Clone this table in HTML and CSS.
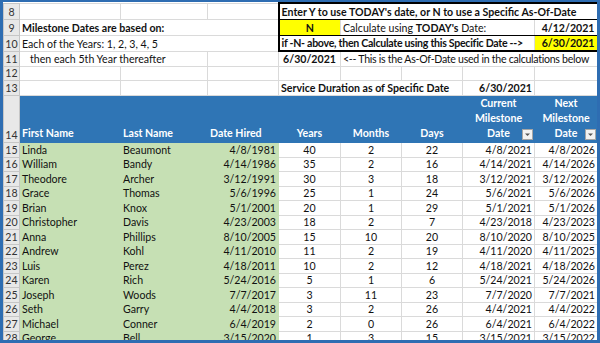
FILE: index.html
```html
<!DOCTYPE html>
<html lang="en">

<head>
    <meta charset="UTF-8">
    <meta name="viewport" content="width=device-width, initial-scale=1.0">
    <title>Service Milestones</title>
    <link rel="stylesheet" href="styles.css">
</head>

<body>
    <div class="sheet">
        <table class="grid">
            <colgroup>
                <col class="c-hdr">
                <col class="c-a">
                <col class="c-b">
                <col class="c-c">
                <col class="c-d">
                <col class="c-e">
                <col class="c-f">
                <col class="c-g">
                <col class="c-h">
            </colgroup>
            <tr class="r8">
                <th>8</th><td></td><td></td><td></td>
                <td colspan="5" class="b box-t box-l box-r line-b">Enter Y to use TODAY's date, or N to use a Specific As-Of-Date</td>
            </tr>
            <tr class="r9">
                <th>9</th><td colspan="3" class="b">Milestone Dates are based on:</td>
                <td class="yellow b ctr box-l line-b">N</td>
                <td colspan="3" class="line-b">Calculate using <b>TODAY's</b> Date:</td>
                <td class="b rt box-r line-b">4/12/2021</td>
            </tr>
            <tr class="r10">
                <th>10</th><td colspan="3">Each of the Years: 1, 2, 3, 4, 5</td>
                <td colspan="4" class="b tight box-l box-b">if -N- above, then Calculate using this Specific Date --&gt;</td>
                <td class="yellow b rt box-r box-b">6/30/2021</td>
            </tr>
            <tr class="r11">
                <th>11</th><td colspan="2" class="indent">then each 5th Year thereafter</td><td></td>
                <td class="b ctr">6/30/2021</td>
                <td colspan="4" class="tight">&lt;-- This is the As-Of-Date used in the calculations below</td>
            </tr>
            <tr class="r12">
                <th>12</th><td></td><td></td><td></td><td></td><td></td><td></td><td></td><td></td>
            </tr>
            <tr class="r13">
                <th>13</th><td></td><td></td><td></td>
                <td colspan="3" class="b">Service Duration as of Specific Date</td>
                <td class="b rt">6/30/2021</td><td></td>
            </tr>
            <tr class="head">
                <th>14</th>
                <td>First Name</td>
                <td>Last Name</td>
                <td>Date Hired</td>
                <td class="ctr">Years</td>
                <td class="ctr">Months</td>
                <td class="ctr">Days</td>
                <td class="ctr filter">Current<br>Milestone<br>Date<span class="drop"><svg width="9" height="9" viewBox="0 0 9 9"><path d="M2 3.5h5L4.5 6z" fill="#555"/></svg></span></td>
                <td class="ctr filter">Next<br>Milestone<br>Date<span class="drop"><svg width="9" height="9" viewBox="0 0 9 9"><path d="M2 3.5h5L4.5 6z" fill="#555"/></svg></span></td>
            </tr>
            <tr class="row"><th>15</th><td class="g">Linda</td><td class="g">Beaumont</td><td class="g rt">4/8/1981</td><td class="ctr">40</td><td class="ctr">2</td><td class="ctr">22</td><td class="rt">4/8/2021</td><td class="rt">4/8/2026</td></tr>
            <tr class="row"><th>16</th><td class="g">William</td><td class="g">Bandy</td><td class="g rt">4/14/1986</td><td class="ctr">35</td><td class="ctr">2</td><td class="ctr">16</td><td class="rt">4/14/2021</td><td class="rt">4/14/2026</td></tr>
            <tr class="row"><th>17</th><td class="g">Theodore</td><td class="g">Archer</td><td class="g rt">3/12/1991</td><td class="ctr">30</td><td class="ctr">3</td><td class="ctr">18</td><td class="rt">3/12/2021</td><td class="rt">3/12/2026</td></tr>
            <tr class="row"><th>18</th><td class="g">Grace</td><td class="g">Thomas</td><td class="g rt">5/6/1996</td><td class="ctr">25</td><td class="ctr">1</td><td class="ctr">24</td><td class="rt">5/6/2021</td><td class="rt">5/6/2026</td></tr>
            <tr class="row"><th>19</th><td class="g">Brian</td><td class="g">Knox</td><td class="g rt">5/1/2001</td><td class="ctr">20</td><td class="ctr">1</td><td class="ctr">29</td><td class="rt">5/1/2021</td><td class="rt">5/1/2026</td></tr>
            <tr class="row"><th>20</th><td class="g">Christopher</td><td class="g">Davis</td><td class="g rt">4/23/2003</td><td class="ctr">18</td><td class="ctr">2</td><td class="ctr">7</td><td class="rt">4/23/2018</td><td class="rt">4/23/2023</td></tr>
            <tr class="row"><th>21</th><td class="g">Anna</td><td class="g">Phillips</td><td class="g rt">8/10/2005</td><td class="ctr">15</td><td class="ctr">10</td><td class="ctr">20</td><td class="rt">8/10/2020</td><td class="rt">8/10/2025</td></tr>
            <tr class="row"><th>22</th><td class="g">Andrew</td><td class="g">Kohl</td><td class="g rt">4/11/2010</td><td class="ctr">11</td><td class="ctr">2</td><td class="ctr">19</td><td class="rt">4/11/2020</td><td class="rt">4/11/2025</td></tr>
            <tr class="row"><th>23</th><td class="g">Luis</td><td class="g">Perez</td><td class="g rt">4/18/2011</td><td class="ctr">10</td><td class="ctr">2</td><td class="ctr">12</td><td class="rt">4/18/2021</td><td class="rt">4/18/2026</td></tr>
            <tr class="row"><th>24</th><td class="g">Karen</td><td class="g">Rich</td><td class="g rt">5/24/2016</td><td class="ctr">5</td><td class="ctr">1</td><td class="ctr">6</td><td class="rt">5/24/2021</td><td class="rt">5/24/2026</td></tr>
            <tr class="row"><th>25</th><td class="g">Joseph</td><td class="g">Woods</td><td class="g rt">7/7/2017</td><td class="ctr">3</td><td class="ctr">11</td><td class="ctr">23</td><td class="rt">7/7/2020</td><td class="rt">7/7/2021</td></tr>
            <tr class="row"><th>26</th><td class="g">Seth</td><td class="g">Garry</td><td class="g rt">4/4/2018</td><td class="ctr">3</td><td class="ctr">2</td><td class="ctr">26</td><td class="rt">4/4/2021</td><td class="rt">4/4/2022</td></tr>
            <tr class="row"><th>27</th><td class="g">Michael</td><td class="g">Conner</td><td class="g rt">6/4/2019</td><td class="ctr">2</td><td class="ctr">0</td><td class="ctr">26</td><td class="rt">6/4/2021</td><td class="rt">6/4/2022</td></tr>
            <tr class="row"><th>28</th><td class="g">George</td><td class="g">Bell</td><td class="g rt">3/15/2020</td><td class="ctr">1</td><td class="ctr">3</td><td class="ctr">15</td><td class="rt">3/15/2021</td><td class="rt">3/15/2022</td></tr>
        </table>
    </div>
</body>

</html>
```

FILE: styles.css
```css
body {
    margin: 0;
    font-family: Lato, "Liberation Sans", sans-serif;
    font-size: 10.6px;
    color: #111;
    background-color: #2e6db2;
}
.sheet {
    width: 600px;
    height: 343px;
    box-sizing: border-box;
    border: 3px solid #2e6db2;
    border-top-width: 2px;
    overflow: hidden;
    background-color: white;
}
.grid {
    table-layout: fixed;
    border-collapse: collapse;
    width: 594px;
}
.c-hdr { width: 16px; }
.c-a { width: 101px; }
.c-b { width: 87px; }
.c-c { width: 71px; }
.c-d { width: 62px; }
.c-e { width: 61px; }
.c-f { width: 61px; }
.c-g { width: 72px; }
.c-h { width: 63px; }

th,
td {
    padding: 0 2px;
    border: 1px solid #dadada;
    white-space: nowrap;
    overflow: hidden;
    vertical-align: bottom;
    line-height: 13px;
}
th {
    background-color: #e8e8e8;
    border-color: #c6c6c6;
    font-weight: normal;
    color: #333;
    text-align: center;
    padding: 0;
}
td {
    text-align: left;
}
.r8 td { height: 15px; }
.r9 td { height: 15px; }
.r10 td { height: 14px; }
.r11 td { height: 14px; }
.r12 td { height: 13px; }
.r13 td { height: 14px; }
.row td { height: 13.5px; }

.b { font-weight: bold; }
.tight { letter-spacing: -0.28px; }
.ctr { text-align: center; }
.rt { text-align: right; }
.indent { padding-left: 10px; }
.yellow { background-color: #ffff00; }
.g {
    background-color: #c6e0b4;
    border-color: #c6e0b4;
}

.box-t { border-top: 2px solid #000; }
.box-l { border-left: 2px solid #000; }
.box-r { border-right: 2px solid #000; }
.box-b { border-bottom: 2px solid #000; }
.line-b { border-bottom: 1px solid #000; }

.head td {
    height: 43px;
    background-color: #2f75b5;
    border-color: #2f75b5;
    color: white;
    font-weight: bold;
    line-height: 15px;
    padding-bottom: 1px;
}
.filter {
    position: relative;
}
.drop {
    position: absolute;
    right: 1px;
    bottom: 2px;
    width: 9px;
    height: 9px;
    background-color: #f2f2f2;
    border: 1px solid #a6a6a6;
    display: flex;
}
```
